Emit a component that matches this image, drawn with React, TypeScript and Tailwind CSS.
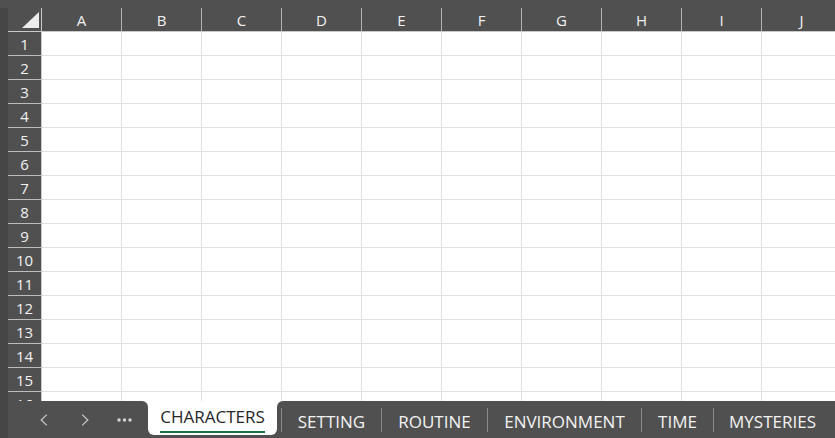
const cols = ["A", "B", "C", "D", "E", "F", "G", "H", "I", "J"];
const rows = Array.from({ length: 16 }, (_, i) => i + 1);

const tabs = [
  { label: "SETTING", cls: "w-[99px]" },
  { label: "ROUTINE", cls: "w-[105px]" },
  { label: "ENVIRONMENT", cls: "w-[153px]" },
  { label: "TIME", cls: "w-[71px]" },
  { label: "MYSTERIES", cls: "w-[117px]" },
];

function Chevron({ dir }: { dir: "left" | "right" }) {
  return (
    <svg width="8" height="12" viewBox="0 0 8 12" fill="none">
      <polyline
        points={dir === "left" ? "6.8,0.6 1.2,6 6.8,11.4" : "1.2,0.6 6.8,6 1.2,11.4"}
        stroke="#c4c4c4"
        strokeWidth="1.3"
      />
    </svg>
  );
}

function Dots() {
  return (
    <svg width="15" height="4" viewBox="0 0 15 4">
      <circle cx="2" cy="2" r="1.7" fill="#d6d6d6" />
      <circle cx="7.5" cy="2" r="1.7" fill="#d6d6d6" />
      <circle cx="13" cy="2" r="1.7" fill="#d6d6d6" />
    </svg>
  );
}

export default function App() {
  return (
    <div className="w-[835px] h-[438px] overflow-hidden bg-[#505050] flex flex-col font-['Open_Sans',sans-serif] select-none">
      <div className="h-[8px] shrink-0" />
      <div className="flex flex-1 min-h-0">
        <div className="w-[8px] shrink-0 bg-[#464646]" />
        <div className="flex-1 min-w-0 flex flex-col overflow-hidden">
          {/* column headers */}
          <div className="flex h-[24px] shrink-0 border-b border-[#c9c9c9]">
            <div className="w-[34px] shrink-0 border-r border-[#c9c9c9] relative">
              <svg className="absolute left-[14px] top-[4px]" width="18" height="17" viewBox="0 0 18 17">
                <polygon points="0,16 17,16 17,0" fill="#ececec" />
              </svg>
            </div>
            {cols.map((c) => (
              <div
                key={c}
                className="w-[80px] shrink-0 border-r border-[#b4b4b4] flex items-center justify-center pt-[1px] text-[15px] leading-[15px] text-[#f2f2f2]"
              >
                {c}
              </div>
            ))}
          </div>

          {/* grid */}
          <div className="flex-1 min-h-0 overflow-hidden">
            {rows.map((r) => (
              <div key={r} className="flex h-[24px]">
                <div className="w-[34px] shrink-0 bg-[#505050] border-r border-b border-r-[#c9c9c9] border-b-[#bdbdbd] flex items-center justify-center pt-[2px] text-[15px] leading-[15px] text-[#f2f2f2]">
                  {r}
                </div>
                {cols.map((c) => (
                  <div key={c} className="w-[80px] shrink-0 bg-white border-r border-b border-[#e1e1e1]" />
                ))}
              </div>
            ))}
          </div>

          {/* sheet tabs */}
          <div className="flex h-[37px] shrink-0 bg-[#505050]">
            <div className="w-[140px] shrink-0 bg-white">
              <div className="h-full bg-[#505050] rounded-tr-[6px] flex items-center pl-[15px]">
                <div className="w-[41px] flex justify-center">
                  <Chevron dir="left" />
                </div>
                <div className="w-[41px] flex justify-center">
                  <Chevron dir="right" />
                </div>
                <div className="w-[39px] flex justify-center">
                  <Dots />
                </div>
              </div>
            </div>
            <div className="w-[129px] h-[34px] shrink-0 bg-white rounded-b-[6px] flex justify-center pt-[7px]">
              <div className="flex flex-col">
                <span className="text-[17px] leading-[17px] text-[#262626]">CHARACTERS</span>
                <div className="mt-[6px] h-[2px] w-full bg-[#1e7145]" />
              </div>
            </div>
            <div className="flex-1 min-w-0 bg-white">
              <div className="h-full bg-[#505050] rounded-tl-[6px] flex items-center pl-[4px]">
                {tabs.map((t) => (
                  <div key={t.label} className="flex items-center h-full">
                    <div className="w-px h-[24px] bg-[#8a8a8a]" />
                    <div
                      className={`${t.cls} shrink-0 flex justify-center pt-[4px] text-[17px] leading-[17px] text-[#f3f3f3] whitespace-nowrap`}
                    >
                      {t.label}
                    </div>
                  </div>
                ))}
              </div>
            </div>
          </div>
        </div>
      </div>
    </div>
  );
}
